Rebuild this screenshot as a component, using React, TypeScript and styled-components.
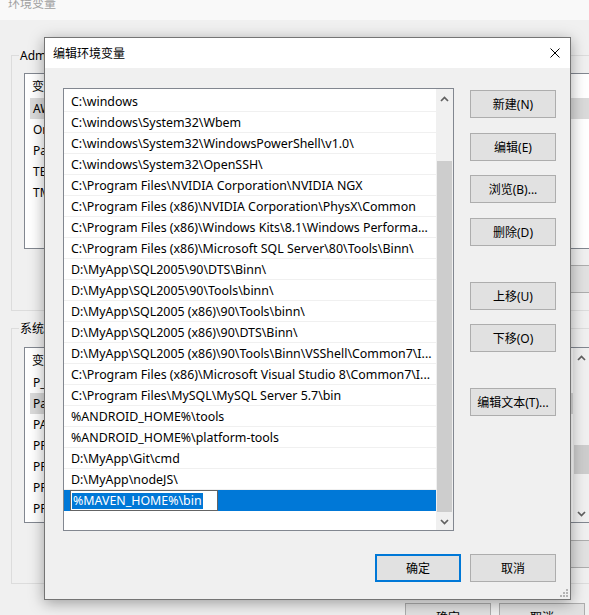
import React from "react";
import styled, { createGlobalStyle, css } from "styled-components";

const GlobalStyle = createGlobalStyle`
  html, body {
    margin: 0;
    padding: 0;
    width: 589px;
    height: 615px;
    overflow: hidden;
    background: #f0f0f0;
  }
  body {
    font-family: "Noto Sans", "Noto Sans CJK SC", "Microsoft YaHei", sans-serif;
    font-size: 12px;
    color: #000;
  }
  * { box-sizing: border-box; }
`;

const Desktop = styled.div`
  position: relative;
  width: 589px;
  height: 615px;
  overflow: hidden;
`;

/* ---------- background window ---------- */

const BgWindow = styled.div`
  width: 615px;
  height: 660px;
  background: #f0f0f0;
  display: flex;
  flex-direction: column;
`;

const BgTitleBar = styled.div`
  height: 20px;
  background: #f9f9f9;
  padding-left: 8px;
  display: flex;
  align-items: flex-start;
`;

const BgTitle = styled.span`
  line-height: 8px;
  color: #a0a0a0;
`;

const BgBody = styled.div`
  padding: 35px 11px 0;
  display: flex;
  flex-direction: column;
  gap: 17px;
`;

const GroupBox = styled.div<{ $padTop: number; $padBottom: number; $gap: number }>`
  position: relative;
  border: 1px solid #dcdcdc;
  padding: ${(p) => p.$padTop}px 12px ${(p) => p.$padBottom}px;
  display: flex;
  flex-direction: column;
  gap: ${(p) => p.$gap}px;
`;

const GroupLabel = styled.span`
  position: absolute;
  left: 7px;
  top: -9px;
  padding: 0 1px;
  line-height: 17px;
  background: #f0f0f0;
  white-space: nowrap;
`;

const ListView = styled.div`
  height: 176px;
  border: 1px solid #828790;
  background: #fff;
  display: flex;
`;

const ListMain = styled.div`
  flex: 1;
  display: flex;
  flex-direction: column;
`;

const ListHeader = styled.div`
  height: 24px;
  padding-left: 7px;
  display: flex;
  align-items: center;
`;

const ListRows = styled.div`
  padding-left: 5px;
  display: flex;
  flex-direction: column;
`;

const ListRow = styled.div<{ $selected?: boolean }>`
  height: 21px;
  padding-left: 3px;
  display: flex;
  align-items: center;
  white-space: nowrap;
  background: ${(p) => (p.$selected ? "#dadada" : "transparent")};
`;

const ButtonRow = styled.div`
  display: flex;
  justify-content: flex-end;
  gap: 8px;
`;

const BgFooter = styled.div`
  margin-top: 19px;
  display: flex;
  justify-content: flex-end;
  gap: 8px;
  padding-right: 30px;
`;

const Button = styled.button<{ $default?: boolean }>`
  width: 86px;
  height: 28px;
  flex: none;
  padding: 0;
  background: #e1e1e1;
  border: 1px solid #adadad;
  font: inherit;
  color: #000;
  display: flex;
  align-items: center;
  justify-content: center;
  ${(p) =>
    p.$default &&
    css`
      border: 2px solid #0078d7;
    `}
`;

/* ---------- scrollbar ---------- */

const ScrollBarBox = styled.div`
  width: 17px;
  flex: none;
  background: #f0f0f0;
  display: flex;
  flex-direction: column;
`;

const ScrollArrow = styled.div<{ $nudge: number }>`
  height: 17px;
  flex: none;
  display: flex;
  align-items: center;
  justify-content: center;
  padding-top: ${(p) => p.$nudge}px;
`;

const ScrollTrack = styled.div<{ $offset: number }>`
  flex: 1;
  padding-top: ${(p) => p.$offset}px;
  display: flex;
  flex-direction: column;
`;

const ScrollThumb = styled.div<{ $size: number }>`
  height: ${(p) => p.$size}px;
  margin: 0 1px;
  background: #cdcdcd;
`;

const Chevron = ({ down }: { down?: boolean }) => (
  <svg width="9" height="6" viewBox="0 0 9 6">
    <polyline
      points={down ? "1,1 4.5,4.6 8,1" : "1,5 4.5,1.4 8,5"}
      fill="none"
      stroke="#606060"
      strokeWidth="1.7"
    />
  </svg>
);

const ScrollBar = ({ offset, size }: { offset: number; size: number }) => (
  <ScrollBarBox>
    <ScrollArrow $nudge={3}>
      <Chevron />
    </ScrollArrow>
    <ScrollTrack $offset={offset}>
      <ScrollThumb $size={size} />
    </ScrollTrack>
    <ScrollArrow $nudge={0}>
      <Chevron down />
    </ScrollArrow>
  </ScrollBarBox>
);

/* ---------- dialog ---------- */

const Dialog = styled.div`
  position: absolute;
  left: 44px;
  top: 37px;
  width: 527px;
  height: 563px;
  border: 1px solid #747474;
  background: #f0f0f0;
  box-shadow: 0 3px 14px rgba(0, 0, 0, 0.35);
  display: flex;
  flex-direction: column;
`;

const DialogTitleBar = styled.div`
  height: 30px;
  flex: none;
  background: #fff;
  padding-left: 8px;
  padding-bottom: 1px;
  display: flex;
  align-items: center;
`;

const DialogTitle = styled.span`
  flex: 1;
`;

const CloseButton = styled.div`
  width: 30px;
  height: 30px;
  display: flex;
  align-items: center;
  justify-content: center;
`;

const DialogBody = styled.div`
  flex: 1;
  padding: 20px 14px 17px 18px;
  display: grid;
  grid-template-columns: 391px 86px;
  grid-template-rows: 443px 28px;
  column-gap: 16px;
  row-gap: 23px;
`;

const PathList = styled.div`
  border: 1px solid #828790;
  background: #fff;
  display: flex;
  overflow: hidden;
`;

const PathRows = styled.div`
  flex: 1;
  min-width: 0;
  padding-top: 2px;
  display: flex;
  flex-direction: column;
  font-size: 12.4px;
`;

const PathRow = styled.div<{ $selected?: boolean }>`
  height: 21px;
  flex: none;
  padding-left: 7px;
  border-bottom: 1px solid ${(p) => (p.$selected ? "#0078d7" : "#f0f0f0")};
  background: ${(p) => (p.$selected ? "#0078d7" : "#fff")};
  display: flex;
  align-items: ${(p) => (p.$selected ? "flex-start" : "center")};
  white-space: nowrap;
  overflow: ${(p) => (p.$selected ? "visible" : "hidden")};
`;

const EditBox = styled.div`
  width: 148px;
  height: 21px;
  margin-left: -1px;
  border: 1px solid #646464;
  background: #fff;
  padding-left: 1px;
  display: flex;
  align-items: center;
`;

const EditSelection = styled.span`
  background: #0078d7;
  color: #fff;
  line-height: 16px;
  padding: 0 1px;
`;

const ButtonColumn = styled.div`
  padding-top: 2px;
  display: flex;
  flex-direction: column;
  gap: 36px;
`;

const ButtonGroup = styled.div`
  display: flex;
  flex-direction: column;
  gap: 14.5px;
`;

const DialogFooter = styled.div`
  grid-column: 1 / span 2;
  display: flex;
  justify-content: flex-end;
  gap: 9px;
`;

const Grip = styled.svg`
  position: absolute;
  right: 2px;
  bottom: 2px;
`;

const paths = [
  "C:\\windows",
  "C:\\windows\\System32\\Wbem",
  "C:\\windows\\System32\\WindowsPowerShell\\v1.0\\",
  "C:\\windows\\System32\\OpenSSH\\",
  "C:\\Program Files\\NVIDIA Corporation\\NVIDIA NGX",
  "C:\\Program Files (x86)\\NVIDIA Corporation\\PhysX\\Common",
  "C:\\Program Files (x86)\\Windows Kits\\8.1\\Windows Performa...",
  "C:\\Program Files (x86)\\Microsoft SQL Server\\80\\Tools\\Binn\\",
  "D:\\MyApp\\SQL2005\\90\\DTS\\Binn\\",
  "D:\\MyApp\\SQL2005\\90\\Tools\\binn\\",
  "D:\\MyApp\\SQL2005 (x86)\\90\\Tools\\binn\\",
  "D:\\MyApp\\SQL2005 (x86)\\90\\DTS\\Binn\\",
  "D:\\MyApp\\SQL2005 (x86)\\90\\Tools\\Binn\\VSShell\\Common7\\I...",
  "C:\\Program Files (x86)\\Microsoft Visual Studio 8\\Common7\\I...",
  "C:\\Program Files\\MySQL\\MySQL Server 5.7\\bin",
  "%ANDROID_HOME%\\tools",
  "%ANDROID_HOME%\\platform-tools",
  "D:\\MyApp\\Git\\cmd",
  "D:\\MyApp\\nodeJS\\",
  "%MAVEN_HOME%\\bin",
];

const userVars = ["AWS_HOME", "OneDrive", "Path", "TEMP", "TMP"];
const sysVars = [
  "P_HOME",
  "Path",
  "PATHEXT",
  "PROCESSOR_ARCHITECTURE",
  "PROCESSOR_IDENTIFIER",
  "PROCESSOR_LEVEL",
  "PROCESSOR_REVISION",
];

const VarList = ({
  names,
  selected,
  scroll,
}: {
  names: string[];
  selected: number;
  scroll?: boolean;
}) => (
  <ListView>
    <ListMain>
      <ListHeader>变量</ListHeader>
      <ListRows>
        {names.map((n, i) => (
          <ListRow key={n} $selected={i === selected}>
            {n}
          </ListRow>
        ))}
      </ListRows>
    </ListMain>
    {scroll && <ScrollBar offset={80} size={29} />}
  </ListView>
);

export default function App() {
  const last = paths.length - 1;
  return (
    <>
      <GlobalStyle />
      <Desktop>
        <BgWindow>
          <BgTitleBar>
            <BgTitle>环境变量</BgTitle>
          </BgTitleBar>
          <BgBody>
            <GroupBox $padTop={17} $padBottom={17} $gap={16}>
              <GroupLabel>Administrator 的用户变量(U)</GroupLabel>
              <VarList names={userVars} selected={0} />
              <ButtonRow>
                <Button>新建(N)...</Button>
                <Button>编辑(E)...</Button>
                <Button>删除(D)</Button>
              </ButtonRow>
            </GroupBox>
            <GroupBox $padTop={18} $padBottom={15} $gap={17}>
              <GroupLabel>系统变量(S)</GroupLabel>
              <VarList names={sysVars} selected={1} scroll />
              <ButtonRow>
                <Button>新建(W)...</Button>
                <Button>编辑(I)...</Button>
                <Button>删除(L)</Button>
              </ButtonRow>
            </GroupBox>
          </BgBody>
          <BgFooter>
            <Button>确定</Button>
            <Button>取消</Button>
          </BgFooter>
        </BgWindow>

        <Dialog>
          <DialogTitleBar>
            <DialogTitle>编辑环境变量</DialogTitle>
            <CloseButton>
              <svg width="10" height="10" viewBox="0 0 10 10">
                <path d="M0.5 0.5 L9.5 9.5 M9.5 0.5 L0.5 9.5" stroke="#000" strokeWidth="1" />
              </svg>
            </CloseButton>
          </DialogTitleBar>
          <DialogBody>
            <PathList>
              <PathRows>
                {paths.map((p, i) =>
                  i === last ? (
                    <PathRow key={p} $selected>
                      <EditBox>
                        <EditSelection>{p}</EditSelection>
                      </EditBox>
                    </PathRow>
                  ) : (
                    <PathRow key={p}>{p}</PathRow>
                  )
                )}
              </PathRows>
              <ScrollBar offset={55} size={351} />
            </PathList>
            <ButtonColumn>
              <ButtonGroup>
                <Button>新建(N)</Button>
                <Button>编辑(E)</Button>
                <Button>浏览(B)...</Button>
                <Button>删除(D)</Button>
              </ButtonGroup>
              <ButtonGroup>
                <Button>上移(U)</Button>
                <Button>下移(O)</Button>
              </ButtonGroup>
              <ButtonGroup>
                <Button>编辑文本(T)...</Button>
              </ButtonGroup>
            </ButtonColumn>
            <DialogFooter>
              <Button $default>确定</Button>
              <Button>取消</Button>
            </DialogFooter>
          </DialogBody>
          <Grip width="8" height="8" viewBox="0 0 8 8">
            <rect x="6" y="0" width="2" height="2" fill="#b4b4b4" />
            <rect x="3" y="3" width="2" height="2" fill="#b4b4b4" />
            <rect x="6" y="3" width="2" height="2" fill="#b4b4b4" />
            <rect x="0" y="6" width="2" height="2" fill="#b4b4b4" />
            <rect x="3" y="6" width="2" height="2" fill="#b4b4b4" />
            <rect x="6" y="6" width="2" height="2" fill="#b4b4b4" />
          </Grip>
        </Dialog>
      </Desktop>
    </>
  );
}
